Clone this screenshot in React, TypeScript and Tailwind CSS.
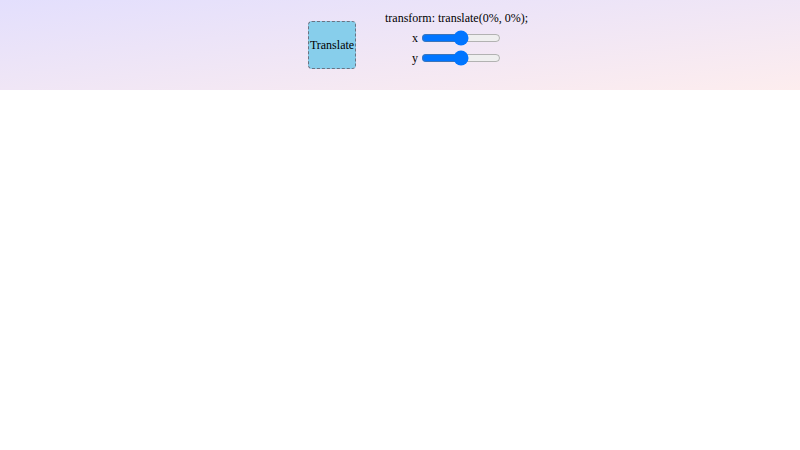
import { useState } from 'react';

export default function App() {
  const [x, setX] = useState(0);
  const [y, setY] = useState(0);

  return (
    <div className="min-h-[450px] bg-white" style={{ fontFamily: '"Liberation Serif", serif' }}>
      <div className="h-[90px] bg-linear-to-br from-[#e3dffd] to-[#fdedee] flex items-center justify-center pl-[36px] gap-[29px]">
        <div className="w-12 h-12 bg-[#87ceeb] border border-dashed border-gray-500 rounded flex items-center justify-center text-[12px] text-black">
          <span style={{ transform: `translate(${x}%, ${y}%)` }}>Translate</span>
        </div>
        <div className="flex flex-col items-center text-[12px] text-black -mt-[14px]">
          <div>transform: translate({x}%, {y}%);</div>
          <div className="flex items-center gap-[3px] mt-[2px]">
            <label>x</label>
            <input
              type="range"
              min={-100}
              max={100}
              value={x}
              onChange={(e) => setX(parseInt(e.target.value))}
              className="w-20"
            />
          </div>
          <div className="flex items-center gap-[3px] mt-[2px]">
            <label>y</label>
            <input
              type="range"
              min={-100}
              max={100}
              value={y}
              onChange={(e) => setY(parseInt(e.target.value))}
              className="w-20"
            />
          </div>
        </div>
      </div>
    </div>
  );
}
